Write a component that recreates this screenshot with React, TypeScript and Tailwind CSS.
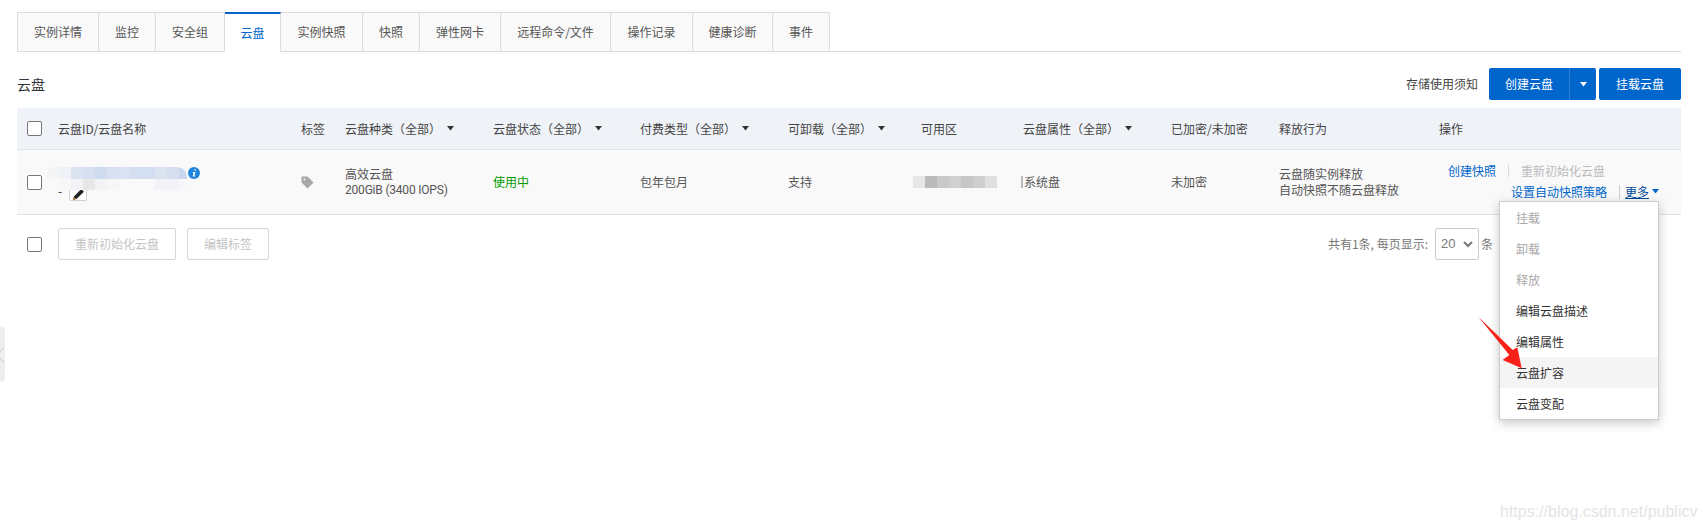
const tabs = [
  { label: "实例详情", w: "w-[82px]" },
  { label: "监控", w: "w-[57px]" },
  { label: "安全组", w: "w-[69px]" },
  { label: "云盘", w: "w-[56px]", active: true },
  { label: "实例快照", w: "w-[82px]" },
  { label: "快照", w: "w-[57px]" },
  { label: "弹性网卡", w: "w-[81px]" },
  { label: "远程命令/文件", w: "w-[110px]" },
  { label: "操作记录", w: "w-[82px]" },
  { label: "健康诊断", w: "w-[80px]" },
  { label: "事件", w: "w-[57px]" },
];

const gridCols =
  "grid grid-cols-[41px_243px_44px_148px_147px_148px_133px_102px_148px_108px_160px_242px] items-center";

const menuItems = [
  { label: "挂载", disabled: true },
  { label: "卸载", disabled: true },
  { label: "释放", disabled: true },
  { label: "编辑云盘描述" },
  { label: "编辑属性" },
  { label: "云盘扩容", hover: true },
  { label: "云盘变配" },
];

function Caret({ className }: { className: string }) {
  return (
    <svg width="7" height="5" viewBox="0 0 7 5" className={className}>
      <path d="M0 0h7L3.500 4.500z" fill="currentColor" />
    </svg>
  );
}

function Checkbox() {
  return <span className="block w-[15px] h-[15px] bg-white border border-[#777] rounded-[2px]" />;
}

function HeaderFilter({ label }: { label: string }) {
  return (
    <div className="flex items-center">
      <span>{label}</span>
      <Caret className="ml-[6px] text-[#333]" />
    </div>
  );
}

function BlurredName() {
  const top = ["bg-[#f4f5f7]", "bg-[#f0f2f7]", "bg-[#dbe3f1]", "bg-[#d6e0f0]", "bg-[#cfdcef]", "bg-[#d6e0f1]", "bg-[#d9e2f2]", "bg-[#d3dff1]", "bg-[#d3dff1]", "bg-[#dbe2f0]", "bg-[#d6deee]", "bg-[#c9d8ee]"];
  const bottom = ["bg-[#f9f9f9]", "bg-[#f8f8f9]", "bg-[#f2f3f6]", "bg-[#e6e8e6]", "bg-[#f3f3f6]", "bg-[#f6f6f8]", "bg-[#f9f9f9]", "bg-[#f9f9f9]", "bg-[#f9f9f9]", "bg-[#f2f2f8]", "bg-[#f2f2f8]", "bg-[#f8f8fa]"];
  return (
    <div className="absolute left-[-11px] top-[4px] w-[140px] overflow-hidden pointer-events-none">
      <div className="flex h-[12px] rounded-tl-[6px] rounded-tr-[10px] overflow-hidden">
        {top.map((c, i) => (
          <span key={i} className={`${c} w-[12px] shrink-0`} />
        ))}
      </div>
      <div className="flex h-[11px]">
        {bottom.map((c, i) => (
          <span key={i} className={`${c} w-[12px] shrink-0`} />
        ))}
      </div>
    </div>
  );
}

export default function App() {
  const grays = ["bg-[#e6e6e6]", "bg-[#bababa]", "bg-[#c9c9c9]", "bg-[#cfd0cf]", "bg-[#c6c7c6]", "bg-[#cfcfcf]", "bg-[#e0e0e0]"];

  return (
    <div className="relative w-[1705px] h-[530px] overflow-hidden bg-white pl-[17px] pr-[24px] pt-[12px] text-[12px] text-[#333] font-['Noto_Sans_CJK_SC','Liberation_Sans',sans-serif]">
      {/* tabs */}
      <div className="flex h-[40px] border-b border-[#dcdcdc]">
        {tabs.map((t) => (
          <div
            key={t.label}
            className={
              t.active
                ? `${t.w} h-[40px] flex items-center justify-center border-t-2 border-t-[#0066cc] border-r border-r-[#dcdcdc] bg-white text-[#0066cc]`
                : `${t.w} h-[39px] flex items-center justify-center border-t border-r border-[#dcdcdc] bg-[#f9f9f9] text-[#555] first:border-l`
            }
          >
            {t.label}
          </div>
        ))}
      </div>

      {/* title bar */}
      <div className="flex items-center justify-between h-[32px] mt-[16px]">
        <span className="text-[14px] text-[#333]">云盘</span>
        <div className="flex items-center text-[#444]">
          <span className="mr-[11px]">存储使用须知</span>
          <div className="flex h-[32px] w-[107px] bg-[#0066cc] text-white rounded-[2px] mr-[3px]">
            <span className="w-[81px] flex items-center justify-center border-r border-[#2c7fd2]">创建云盘</span>
            <span className="flex-1 flex items-center justify-center">
              <Caret className="text-white" />
            </span>
          </div>
          <div className="flex items-center justify-center h-[32px] w-[82px] bg-[#0066cc] text-white rounded-[2px]">
            挂载云盘
          </div>
        </div>
      </div>

      {/* table header */}
      <div className={`${gridCols} h-[42px] mt-[8px] bg-[#eff2f7] border-b border-[#e1e3e8] text-[#444]`}>
        <div className="pl-[10px]">
          <Checkbox />
        </div>
        <span>云盘ID/云盘名称</span>
        <span>标签</span>
        <HeaderFilter label="云盘种类（全部）" />
        <HeaderFilter label="云盘状态（全部）" />
        <HeaderFilter label="付费类型（全部）" />
        <HeaderFilter label="可卸载（全部）" />
        <span>可用区</span>
        <HeaderFilter label="云盘属性（全部）" />
        <span>已加密/未加密</span>
        <span>释放行为</span>
        <span>操作</span>
      </div>

      {/* table row */}
      <div className={`${gridCols} h-[65px] bg-[#f9f9f9] border-b border-[#e1e1e1] text-[#555]`}>
        <div className="pl-[10px]">
          <Checkbox />
        </div>
        <div className="relative h-[36px] mt-[-2px]">
          <span className="absolute left-0 top-[19px] text-[#333] leading-[18px]">-</span>
          <span className="absolute left-[11px] top-[24px] flex items-center justify-center w-[18px] h-[14px] bg-white border border-[#cfd0d3] rounded-[2px]">
            <svg width="13" height="13" viewBox="0 0 12 12">
              <path d="M1 11l1-3.400L8.600 1 11 3.400 4.400 10z" fill="#222" />
              <path d="M1 11l.8-2.800 2 2z" fill="#c9772a" />
            </svg>
          </span>
          <BlurredName />
          <svg width="12" height="12" viewBox="0 0 12 12" className="absolute left-[130px] top-[4px]">
            <circle cx="6" cy="6" r="6" fill="#1f85dc" />
            <path d="M6.600 2.200h1.500l-.3 1.300H6.300zM5 5h2.400l-1 3.600h1l-.2.900H4.600l1-3.600h-.8z" fill="#fff" />
          </svg>
        </div>
        <svg width="13" height="13" viewBox="0 0 13 13">
          <path d="M0.500 0.500h6l6 6-6 6-6-6z" fill="#a6a6a6" />
          <circle cx="3.500" cy="3.500" r="1" fill="#f9f9f9" />
        </svg>
        <div className="leading-[16px]">
          <div>高效云盘</div>
          <div className="font-['Roboto',sans-serif] tracking-[-0.2px]">200GiB (3400 IOPS)</div>
        </div>
        <span className="text-[#009900]">使用中</span>
        <span>包年包月</span>
        <span>支持</span>
        <div className="flex ml-[-8px]">
          {grays.map((c, i) => (
            <span key={i} className={`${c} w-[12px] h-[12px]`} />
          ))}
        </div>
        <div className="flex items-center ml-[-2px]">
          <span className="w-[2px] h-[12px] mr-[1px] bg-[#bbb]" />
          <span>系统盘</span>
        </div>
        <span>未加密</span>
        <div className="leading-[16px]">
          <div>云盘随实例释放</div>
          <div>自动快照不随云盘释放</div>
        </div>
        <div className="relative h-[40px] ml-[9px] mt-[-1px]">
          <div className="flex items-center h-[18px]">
            <span className="text-[#0066cc]">创建快照</span>
            <span className="mx-[12px] h-[12px] border-l border-[#cfdccf]" />
            <span className="text-[#bbb]">重新初始化云盘</span>
          </div>
          <div className="flex items-center h-[18px] mt-[3px] ml-[63px] whitespace-nowrap">
            <span className="text-[#0066cc] w-[96px]">设置自动快照策略</span>
            <span className="ml-[12px] mr-[5px] h-[14px] border-l border-[#c9c9c9]" />
            <span className="text-[#004a99] underline">更多</span>
            <Caret className="ml-[3px] text-[#0066cc]" />
          </div>
        </div>
      </div>

      {/* footer */}
      <div className="flex items-center justify-between mt-[13px] h-[32px]">
        <div className="flex items-center pl-[10px]">
          <Checkbox />
          <span className="ml-[16px] flex items-center justify-center w-[118px] h-[32px] border border-[#d5d5d5] rounded-[2px] text-[#c4c4c4]">
            重新初始化云盘
          </span>
          <span className="ml-[11px] flex items-center justify-center w-[82px] h-[32px] border border-[#d5d5d5] rounded-[2px] text-[#c4c4c4]">
            编辑标签
          </span>
        </div>
        <div className="flex items-center mr-[188px] text-[#777]">
          <span>共有1条, 每页显示:</span>
          <span className="ml-[7px] flex items-center justify-between w-[44px] h-[32px] pl-[5px] pr-[5px] border border-[#ccc] rounded-[2px]">
            <span className="text-[#777] text-[13px] font-['Liberation_Sans',sans-serif]">20</span>
            <svg width="10" height="7" viewBox="0 0 10 7">
              <path d="M1 1l4 4 4-4" fill="none" stroke="#777" strokeWidth="2" />
            </svg>
          </span>
          <span className="ml-[2px]">条</span>
        </div>
      </div>

      {/* more menu */}
      <div className="absolute left-[1499px] top-[201px] w-[160px] bg-white border border-[#ccc] shadow-[0_3px_10px_rgba(0,0,0,0.22)]">
        {menuItems.map((m) => (
          <div
            key={m.label}
            className={`h-[31px] flex items-center pl-[16px] ${m.disabled ? "text-[#a8a8a8]" : "text-[#333]"} ${m.hover ? "bg-[#f4f4f4]" : ""}`}
          >
            {m.label}
          </div>
        ))}
      </div>

      {/* red annotation arrow */}
      <svg width="60" height="64" viewBox="0 0 60 64" className="absolute left-[1472px] top-[312px]">
        <path d="M6.300 4.700L40.700 38l4.600-2.700 4.400 21-19-8.300 6.600-5z" fill="#f8211a" />
      </svg>

      {/* collapsed sidebar handle */}
      <div className="absolute left-0 top-[327px] w-[5px] h-[55px] bg-[#eeeeee] rounded-r-[4px] flex items-center">
        <svg width="5" height="16" viewBox="0 0 5 16">
          <path d="M4 1L-4 8L4 15" fill="none" stroke="#c8c8c8" strokeWidth="1" />
        </svg>
      </div>

      {/* watermark */}
      <div className="absolute left-[1500px] top-[502px] text-[16px] leading-[20px] text-[#e4e4e4] font-['Liberation_Sans',sans-serif]">
        https://blog.csdn.net/publicv
      </div>
    </div>
  );
}
